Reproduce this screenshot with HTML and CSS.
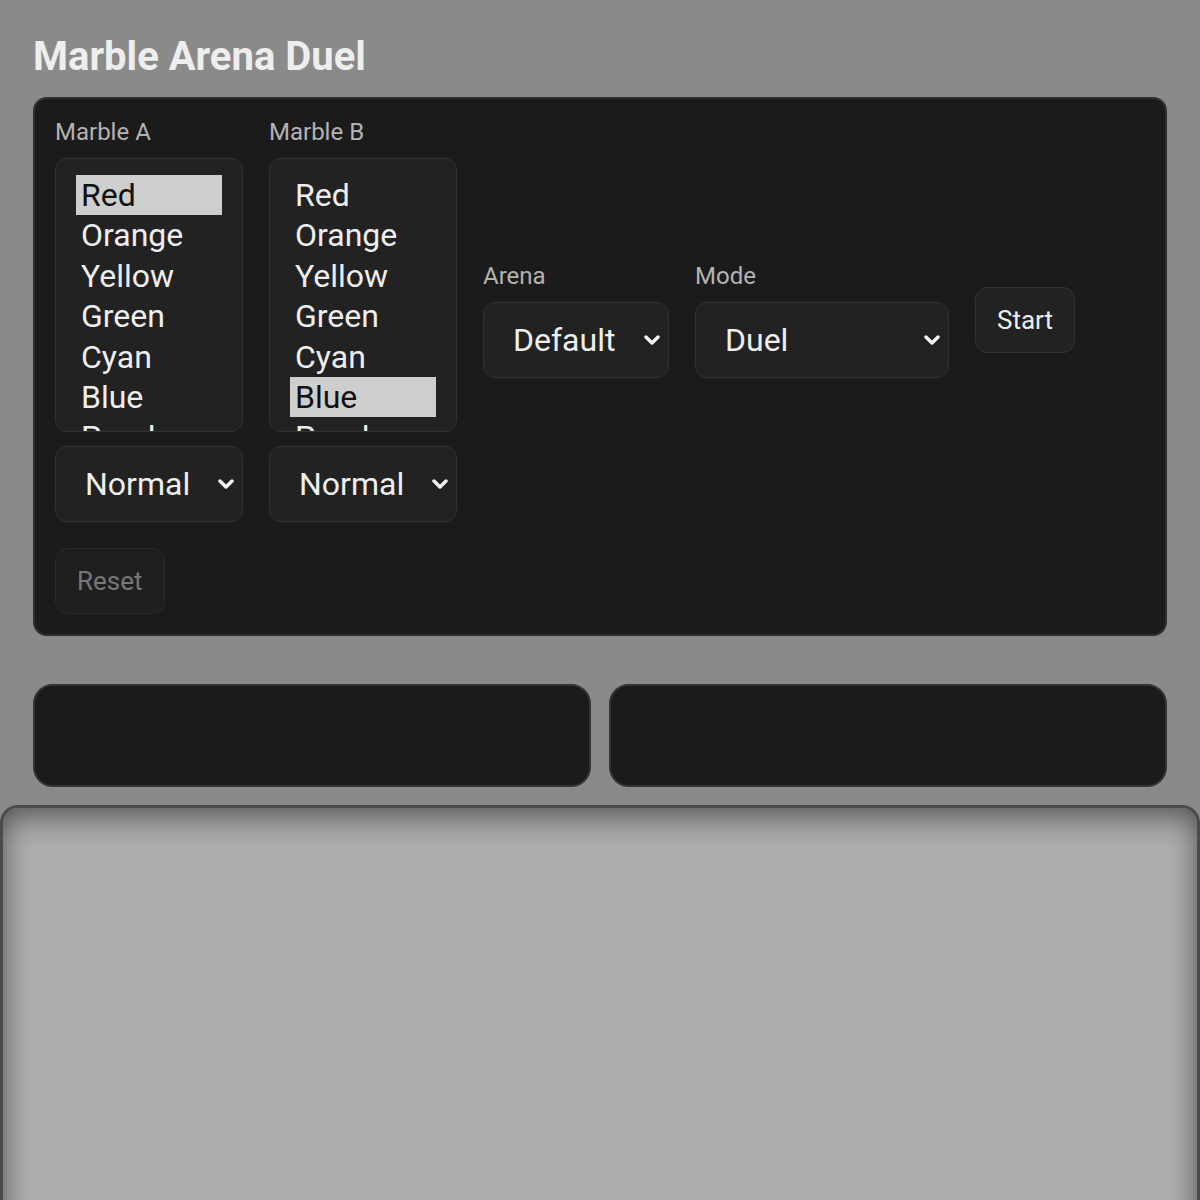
FILE: index.html
```html
<!DOCTYPE html>
<html lang="en">

<head>
  <meta charset="UTF-8">
  <meta name="viewport" content="width=device-width, initial-scale=1.0">
  <title>Marble Arena Duel</title>
  <link rel="stylesheet" href="styles.css">
</head>

<body>
  <div class="wrap">
    <h1>Marble Arena Duel</h1>

    <section class="panel">
      <div class="controls">
        <div class="field">
          <label for="marbleA">Marble A</label>
          <select id="marbleA" class="listbox" size="7">
            <option selected>Red</option>
            <option>Orange</option>
            <option>Yellow</option>
            <option>Green</option>
            <option>Cyan</option>
            <option>Blue</option>
            <option>Purple</option>
            <option>Pink</option>
          </select>
          <div class="select-wrap">
            <select class="dropdown">
              <option>Normal</option>
              <option>Heavy</option>
              <option>Light</option>
            </select>
            <svg class="chevron" width="16" height="10" viewBox="0 0 16 10"><polyline points="2,2 8,8 14,2" /></svg>
          </div>
        </div>

        <div class="field">
          <label for="marbleB">Marble B</label>
          <select id="marbleB" class="listbox" size="7">
            <option>Red</option>
            <option>Orange</option>
            <option>Yellow</option>
            <option>Green</option>
            <option>Cyan</option>
            <option selected>Blue</option>
            <option>Purple</option>
            <option>Pink</option>
          </select>
          <div class="select-wrap">
            <select class="dropdown">
              <option>Normal</option>
              <option>Heavy</option>
              <option>Light</option>
            </select>
            <svg class="chevron" width="16" height="10" viewBox="0 0 16 10"><polyline points="2,2 8,8 14,2" /></svg>
          </div>
        </div>

        <div class="field">
          <label for="arena">Arena</label>
          <div class="select-wrap arena">
            <select id="arena" class="dropdown">
              <option>Default</option>
              <option>Ice</option>
              <option>Sand</option>
            </select>
            <svg class="chevron" width="16" height="10" viewBox="0 0 16 10"><polyline points="2,2 8,8 14,2" /></svg>
          </div>
        </div>

        <div class="field">
          <label for="mode">Mode</label>
          <div class="select-wrap mode">
            <select id="mode" class="dropdown">
              <option>Duel</option>
              <option>King of the Hill</option>
            </select>
            <svg class="chevron" width="16" height="10" viewBox="0 0 16 10"><polyline points="2,2 8,8 14,2" /></svg>
          </div>
        </div>

        <button class="btn">Start</button>
      </div>

      <div class="actions">
        <button class="btn" disabled>Reset</button>
      </div>
    </section>

    <div class="stats">
      <div class="stat-card"></div>
      <div class="stat-card"></div>
    </div>
  </div>

  <div class="arena-view"></div>
</body>
</html>
```

FILE: styles.css
```css
body {
  font-family: Roboto, "Liberation Sans", sans-serif;
  background-color: #8a8a8a;
  margin: 0;
  padding: 0;
  overflow: hidden;
}

.wrap {
  padding: 33px 33px 0;
}

h1 {
  color: #eeeeee;
  font-size: 40px;
  font-weight: 700;
  margin: 0 0 17px;
}

.panel {
  background-color: #1b1b1b;
  border: 2px solid #2f2f2f;
  border-radius: 14px;
  padding: 19px 20px 20px;
}

.controls {
  display: flex;
  align-items: center;
  gap: 26px;
}

.field {
  display: flex;
  flex-direction: column;
}

label {
  color: #b3b3b3;
  font-size: 24px;
  margin-bottom: 12px;
}

.listbox {
  width: 188px;
  height: 274px;
  box-sizing: border-box;
  padding: 16px 20px;
  background-color: #222222;
  color: #eeeeee;
  border: 1px solid #333333;
  border-radius: 12px;
  font-family: Roboto, "Liberation Sans", sans-serif;
  font-size: 32px;
  overflow: hidden;
  outline: none;
}

.listbox option {
  padding: 1px 5px;
}

.listbox option:checked {
  background: #cecece;
  color: #111111;
}

.select-wrap {
  position: relative;
  width: 188px;
  margin-top: 14px;
}

.select-wrap.arena {
  width: 186px;
  margin-top: 0;
}

.select-wrap.mode {
  width: 254px;
  margin-top: 0;
}

.dropdown {
  appearance: none;
  display: block;
  width: 100%;
  height: 76px;
  box-sizing: border-box;
  padding: 0 40px 0 29px;
  background-color: #222222;
  color: #eeeeee;
  border: 1px solid #333333;
  border-radius: 12px;
  font-family: Roboto, "Liberation Sans", sans-serif;
  font-size: 32px;
  outline: none;
}

.chevron {
  position: absolute;
  right: 9px;
  top: 33px;
  fill: none;
  stroke: #f2f2f2;
  stroke-width: 3.5;
  stroke-linecap: round;
  stroke-linejoin: round;
  pointer-events: none;
}

.btn {
  font-family: Roboto, "Liberation Sans", sans-serif;
  font-size: 26px;
  color: #eeeeee;
  background-color: #222222;
  border: 1px solid #333333;
  border-radius: 12px;
  padding: 17px 21px;
}

.btn:disabled {
  color: #777777;
  background-color: #1f1f1f;
  border-color: #292929;
}

.actions {
  margin-top: 26px;
}

.stats {
  display: grid;
  grid-template-columns: 1fr 1fr;
  gap: 18px;
  margin-top: 48px;
}

.stat-card {
  height: 99px;
  background-color: #1b1b1b;
  border: 2px solid #333333;
  border-radius: 20px;
}

.arena-view {
  margin-top: 18px;
  height: 500px;
  background-color: #aeaeae;
  border: 3px solid #4a4a4a;
  border-bottom: none;
  border-radius: 18px 18px 0 0;
  box-shadow: inset 0 12px 30px rgba(0, 0, 0, 0.35), inset 0 0 24px rgba(0, 0, 0, 0.25);
}
```
